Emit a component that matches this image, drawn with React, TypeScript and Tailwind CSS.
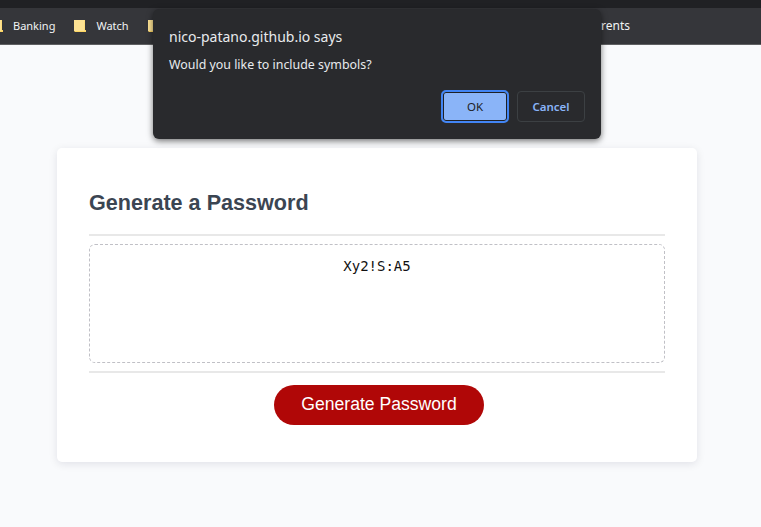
const ui = { fontFamily: '"Noto Sans", "Open Sans", sans-serif' };

function Folder() {
  return (
    <svg width="12" height="14" viewBox="0 0 12 14" className="shrink-0">
      <path d="M0 1h11v10l1 0v2H1l-1-1z" fill="#fdd663" />
      <path d="M0 1h10.5v11H0z" fill="#fde293" />
    </svg>
  );
}

function Bookmark({ label }: { label: string }) {
  return (
    <div className="flex items-center gap-[10px]">
      <Folder />
      <span className="text-[11px] text-[#f1f3f4] whitespace-nowrap">{label}</span>
    </div>
  );
}

export default function App() {
  return (
    <div className="relative h-[527px] w-[761px] overflow-hidden bg-[#f9fafc]">
      <div className="h-2 bg-[#202124]" />
      <div className="flex h-[37px] items-center justify-between border-b border-[#5f6062] bg-[#35363a] pr-[131px]" style={ui}>
        <div className="-ml-[9px] flex items-center gap-[19px]">
          <Bookmark label="Banking" />
          <Bookmark label="Watch" />
          <Folder />
        </div>
        <span className="text-[12px] text-[#f1f3f4]">rrents</span>
      </div>

      <main className="mx-[57px] mt-[103px] flex h-[314px] w-[640px] flex-col rounded-[5px] bg-white px-8 shadow-[0_2px_8px_rgba(0,0,50,0.1)]">
        <h1 className="mt-[40px] text-[21.6px] leading-[30px] font-bold text-[#3b4552]" style={{ fontFamily: '"Liberation Sans", sans-serif' }}>
          Generate a Password
        </h1>
        <div className="mt-[16px] h-[2px] bg-[#e8e8e8]" />
        <div className="mt-[8px] h-[119px] rounded-md border border-dashed border-[#c0c0c6] pt-[11px] text-center text-[14px] leading-[20px] text-[#111]" style={{ fontFamily: '"DejaVu Sans Mono", monospace' }}>
          Xy2!S:A5
        </div>
        <div className="mt-2 h-[2px] bg-[#e8e8e8]" />
        <button className="mx-auto mt-3 h-10 w-[210px] translate-x-[2px] rounded-[20px] bg-[#b00707] pb-[2px] text-[17.6px] text-white" style={{ fontFamily: '"Liberation Sans", sans-serif' }}>
          Generate Password
        </button>
      </main>

      <div className="absolute left-[153px] top-[9px] flex h-[130px] w-[448px] flex-col rounded-[6px] bg-[#292a2d] px-4 pt-[16px] shadow-[0_2px_6px_rgba(0,0,0,0.55)]" style={ui}>
        <div className="text-[14px] leading-[24px] text-[#e8eaed]">nico-patano.github.io says</div>
        <div className="mt-[7px] text-[12.4px] leading-[18px] text-[#e8eaed]">Would you like to include symbols?</div>
        <div className="mt-[16px] flex items-center justify-end gap-2">
          <button className="h-[33px] w-[68px] rounded-[5px] border-2 border-[#4285f4] bg-[#8ab4f8] text-[11.5px] text-[#202124] shadow-[inset_0_0_0_1px_#202124]">OK</button>
          <button className="h-[31px] w-[68px] rounded-[4px] border border-[#3c4043] text-[11.5px] font-semibold text-[#8ab4f8]">Cancel</button>
        </div>
      </div>
    </div>
  );
}
